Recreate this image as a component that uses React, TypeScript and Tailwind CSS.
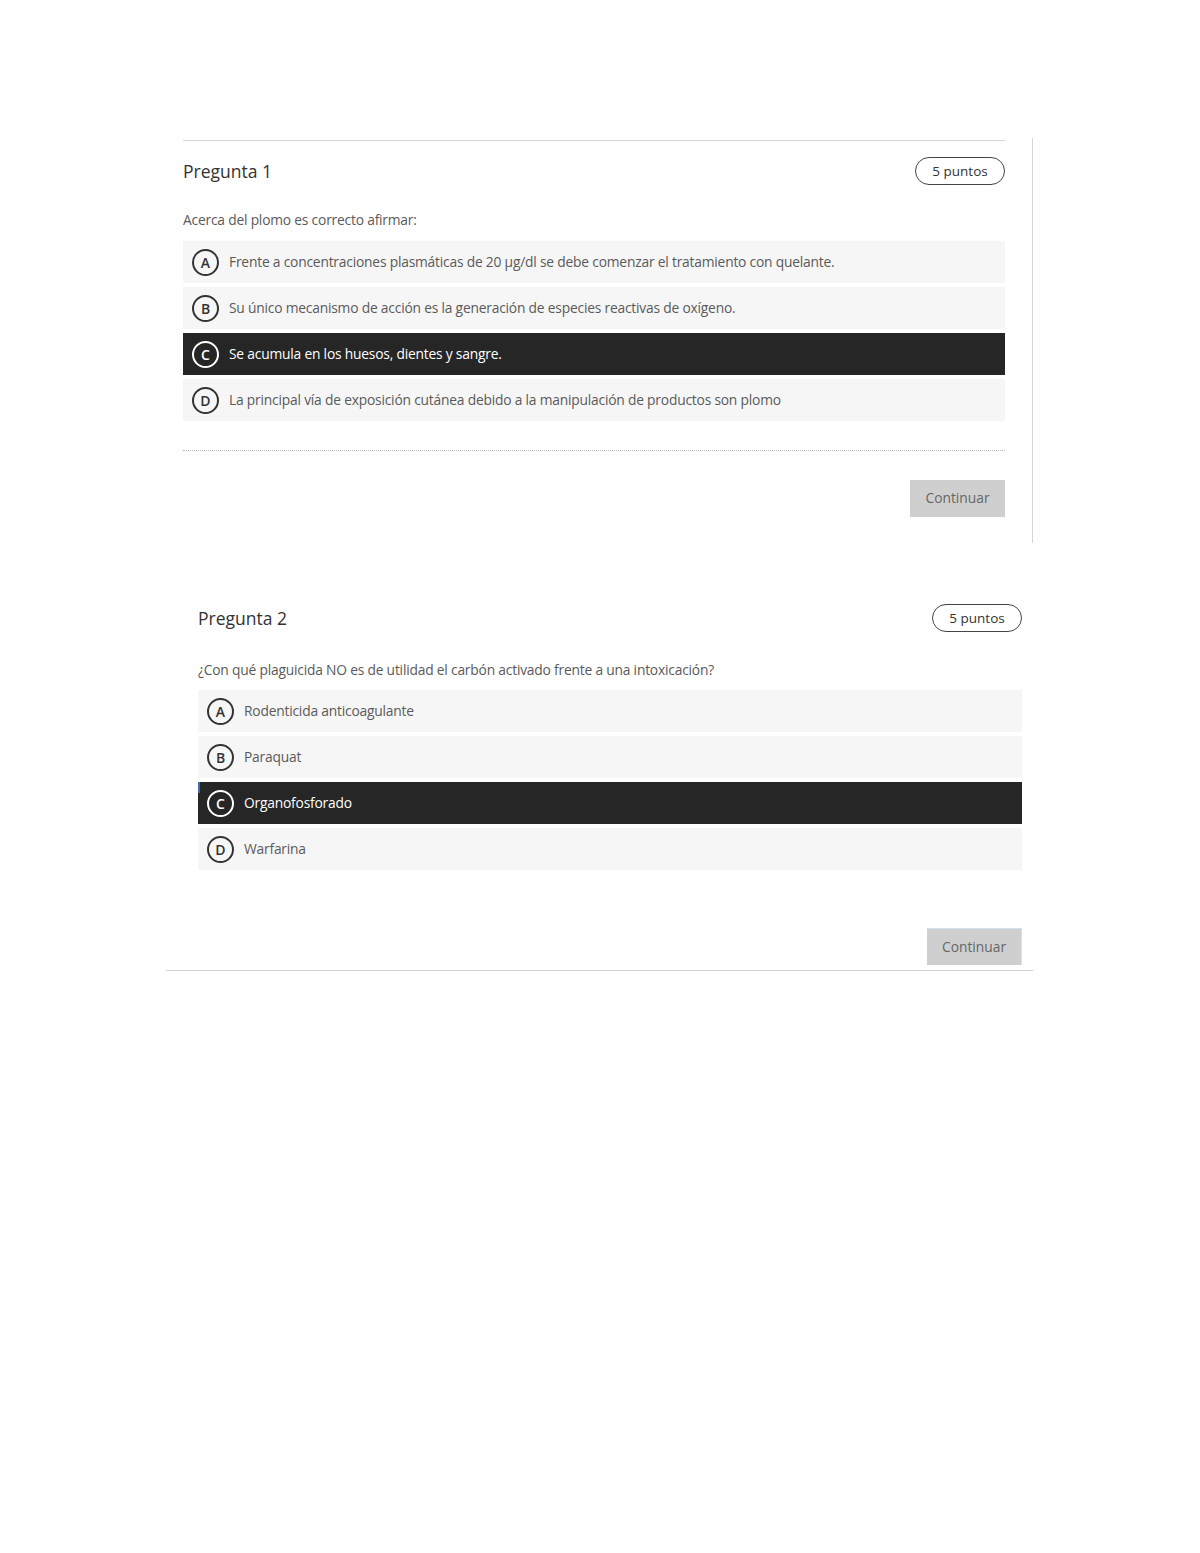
import React from "react";

type Opt = { l: string; t: string; sel?: boolean; mark?: boolean };

function Option({ o }: { o: Opt }) {
  return (
    <div
      className={
        "relative flex h-[42px] items-center pl-[9px] " +
        (o.sel ? "bg-[#262626] text-white" : "bg-[#f6f6f6] text-[#5a5a5a]")
      }
    >
      {o.mark && <div className="absolute left-0 top-0 h-[11px] w-[2px] bg-[#3d6fa8]" />}
      <div
        className={
          "flex h-[27px] w-[27px] items-center justify-center rounded-full border-[2px] text-[14px] font-semibold " +
          (o.sel ? "border-white text-white" : "border-[#333] text-[#333]")
        }
      >
        {o.l}
      </div>
      <span className="ml-[10px] text-[13.8px] tracking-[-0.2px]">{o.t}</span>
    </div>
  );
}

function Badge() {
  return (
    <div className="flex h-[28px] w-[90px] items-center justify-center rounded-full border border-[#444] text-[13.5px] text-[#333]">
      5 puntos
    </div>
  );
}

function Button({ blue }: { blue?: boolean }) {
  return (
    <div
      className={
        "flex h-[37px] w-[95px] items-center justify-center bg-[#cfcfcf] text-[13.8px] text-[#666] " +
        (blue ? "border-t border-r border-[#cfe3f3]" : "")
      }
    >
      Continuar
    </div>
  );
}

export default function App() {
  const q1: Opt[] = [
    { l: "A", t: "Frente a concentraciones plasmáticas de 20 μg/dl se debe comenzar el tratamiento con quelante." },
    { l: "B", t: "Su único mecanismo de acción es la generación de especies reactivas de oxígeno." },
    { l: "C", t: "Se acumula en los huesos, dientes y sangre.", sel: true },
    { l: "D", t: "La principal vía de exposición cutánea debido a la manipulación de productos son plomo" },
  ];
  const q2: Opt[] = [
    { l: "A", t: "Rodenticida anticoagulante" },
    { l: "B", t: "Paraquat" },
    { l: "C", t: "Organofosforado", sel: true, mark: true },
    { l: "D", t: "Warfarina" },
  ];
  return (
    <div
      className="relative h-[1553px] w-[1200px] bg-white"
      style={{ fontFamily: '"Open Sans", "Noto Sans", sans-serif' }}
    >
      <div className="ml-[183px] flex pt-[138px]">
        <div className="w-[822px] pt-[2px]">
          <div className="border-t border-[#d6d6d6]" />
          <div className="mt-[16px] flex h-[28px] items-center justify-between">
            <div className="text-[17.5px] text-[#333]">Pregunta 1</div>
            <Badge />
          </div>
          <div className="mt-[26px] text-[13.8px] leading-[18px] tracking-[-0.2px] text-[#5a5a5a]">
            Acerca del plomo es correcto afirmar:
          </div>
          <div className="mt-[12px] flex flex-col gap-[4px]">
            {q1.map((o) => (
              <Option key={o.l} o={o} />
            ))}
          </div>
          <div className="mt-[29px] border-t border-dotted border-[#bbb]" />
          <div className="mt-[29px] flex justify-end">
            <Button />
          </div>
          <div className="h-[26px]" />
        </div>
        <div className="ml-[27px] w-px bg-[#d6d6d6]" />
      </div>

      <div className="ml-[166px] mt-[61px] w-[867px]">
        <div className="ml-[32px] w-[824px]">
          <div className="flex h-[28px] items-center justify-between">
            <div className="text-[17.5px] text-[#333]">Pregunta 2</div>
            <Badge />
          </div>
          <div className="mt-[29px] text-[13.8px] leading-[18px] tracking-[-0.2px] text-[#5a5a5a]">
            ¿Con qué plaguicida NO es de utilidad el carbón activado frente a una intoxicación?
          </div>
          <div className="mt-[11px] flex flex-col gap-[4px]">
            {q2.map((o) => (
              <Option key={o.l} o={o} />
            ))}
          </div>
          <div className="mt-[58px] flex justify-end">
            <Button blue />
          </div>
        </div>
        <div className="mt-[5px] border-t border-[#d0d0d0]" />
      </div>
    </div>
  );
}
